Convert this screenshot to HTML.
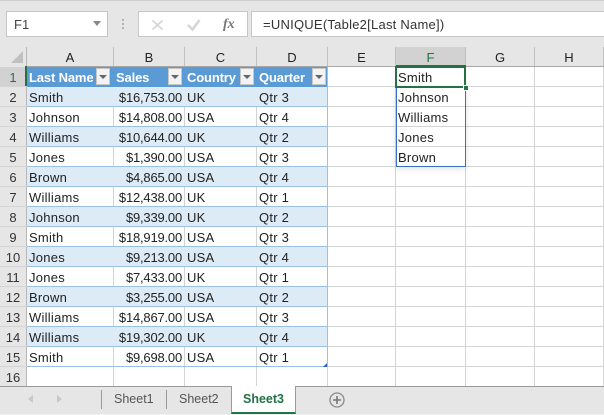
<!DOCTYPE html>
<html><head><meta charset="utf-8">
<style>
html,body{margin:0;padding:0}
body{width:604px;height:415px;overflow:hidden;background:#fff;position:relative;font-family:"Liberation Sans",sans-serif;font-size:13px;color:#222}
div{position:absolute;box-sizing:border-box}
.c{height:20px;line-height:22px;white-space:nowrap;letter-spacing:.25px}
.a{left:29px}.b{left:114px;width:68px;text-align:right;letter-spacing:-.2px}.d{left:187px}.e{left:259px}
.band{left:27px;width:301px;height:20px;background:#ddebf7;border-bottom:1px solid #9bc2e6}
.wb{left:27px;width:301px;height:20px;border-bottom:1px solid #9bc2e6}
.h{left:0;width:26px;text-align:center;height:20px;line-height:22px;color:#333;letter-spacing:0}
.ch{top:47px;height:19px;line-height:21px;text-align:center;color:#222;background:#e6e6e6;border-right:1px solid #c0c0c0}
.hl{left:0;width:604px;height:1px;background:#d4d4d4}
.vl{top:67px;width:1px;height:319px;background:#d4d4d4}
.th{top:67px;height:19px;line-height:22px;color:#fff;font-weight:bold;letter-spacing:-.15px;white-space:nowrap}
.fb{top:68px;width:14px;height:17px;background:#f3f3f3;border:1px solid #c8c8c8}
.fb:after{content:"";position:absolute;left:2px;top:6px;border:4px solid transparent;border-top:4px solid #666;border-bottom:0}
</style></head><body>

<div style="left:0;top:0;width:604px;height:47px;background:#e6e6e6"></div>
<div style="left:0;top:0;width:604px;height:1px;background:#cfcfcf"></div>
<div style="left:6px;top:11px;width:102px;height:26px;background:#fff;border:1px solid #c6c6c6"></div>
<div style="left:14px;top:16px;height:18px;line-height:18px;color:#444">F1</div>
<div style="left:93px;top:21px;border:4px solid transparent;border-top:5px solid #888;border-bottom:0"></div>
<div style="left:122px;top:19px;width:2px;height:2px;background:#b5b5b5"></div>
<div style="left:122px;top:23px;width:2px;height:2px;background:#b5b5b5"></div>
<div style="left:122px;top:27px;width:2px;height:2px;background:#b5b5b5"></div>
<div style="left:138px;top:11px;width:110px;height:26px;background:#fff;border:1px solid #c6c6c6"></div>
<svg style="position:absolute;left:150px;top:17px" width="90" height="16" viewBox="0 0 90 16">
<path d="M2.5 3.5L12.5 12.5M12.5 3.5L2.5 12.5" stroke="#d6d6d6" stroke-width="1.8" fill="none"/>
<path d="M38 8L42.5 12.5L49.5 3" stroke="#d6d6d6" stroke-width="2.6" fill="none"/>
</svg>
<div style="left:223px;top:16px;height:18px;line-height:18px;font-family:'Liberation Serif',serif;font-style:italic;font-weight:bold;font-size:14px;color:#777">fx</div>
<div style="left:251px;top:11px;width:353px;height:26px;background:#fff;border:1px solid #c6c6c6;border-right:0"></div>
<div style="left:263px;top:16px;height:18px;line-height:18px;color:#333;letter-spacing:.24px;white-space:nowrap">=UNIQUE(Table2[Last Name])</div>

<div style="left:0;top:47px;width:604px;height:20px;background:#e6e6e6;border-bottom:1px solid #a8a8a8"></div>
<div style="left:0;top:47px;width:27px;height:340px;background:#e6e6e6;border-right:1px solid #b8b8b8"></div>
<div style="left:11px;top:51px;width:0;height:0;border-style:solid;border-width:0 0 12px 12px;border-color:transparent transparent #c0c0c0 transparent"></div>
<div class="ch" style="left:27px;width:87px">A</div>
<div class="ch" style="left:114px;width:71px">B</div>
<div class="ch" style="left:185px;width:72px">C</div>
<div class="ch" style="left:257px;width:71px">D</div>
<div class="ch" style="left:328px;width:68px">E</div>
<div class="ch" style="left:396px;width:70px;background:#d2d2d2;color:#217346">F</div>
<div class="ch" style="left:466px;width:69px">G</div>
<div class="ch" style="left:535px;width:69px">H</div>
<div style="left:396px;top:65px;width:70px;height:2px;background:#217346"></div>
<div style="left:0;top:67px;width:26px;height:19px;background:#d2d2d2"></div>
<div style="left:25px;top:66px;width:2px;height:21px;background:#217346"></div>

<div class="vl" style="left:113px"></div><div class="vl" style="left:184px"></div><div class="vl" style="left:256px"></div><div class="vl" style="left:327px"></div><div class="vl" style="left:395px"></div><div class="vl" style="left:465px"></div><div class="vl" style="left:534px"></div><div class="vl" style="left:603px"></div>
<div class="hl" style="top:86px"></div><div class="hl" style="top:106px"></div><div class="hl" style="top:126px"></div><div class="hl" style="top:146px"></div><div class="hl" style="top:166px"></div><div class="hl" style="top:186px"></div><div class="hl" style="top:206px"></div><div class="hl" style="top:226px"></div><div class="hl" style="top:246px"></div><div class="hl" style="top:266px"></div><div class="hl" style="top:286px"></div><div class="hl" style="top:306px"></div><div class="hl" style="top:326px"></div><div class="hl" style="top:346px"></div><div class="hl" style="top:366px"></div>

<div style="left:27px;top:67px;width:301px;height:20px;background:#5b9bd5"></div>
<div class="th" style="left:29px">Last Name</div><div class="fb" style="left:96px"></div>
<div class="th" style="left:116px">Sales</div><div class="fb" style="left:168px"></div>
<div class="th" style="left:187px">Country</div><div class="fb" style="left:240px"></div>
<div class="th" style="left:259px">Quarter</div><div class="fb" style="left:312px"></div>

<div class="band" style="top:87px"></div><div class="wb" style="top:107px"></div>
<div class="band" style="top:127px"></div><div class="wb" style="top:147px"></div>
<div class="band" style="top:167px"></div><div class="wb" style="top:187px"></div>
<div class="band" style="top:207px"></div><div class="wb" style="top:227px"></div>
<div class="band" style="top:247px"></div><div class="wb" style="top:267px"></div>
<div class="band" style="top:287px"></div><div class="wb" style="top:307px"></div>
<div class="band" style="top:327px"></div><div class="wb" style="top:347px"></div>
<div style="left:327px;top:67px;width:1px;height:300px;background:#9bc2e6"></div>
<div style="left:323px;top:363px;width:0;height:0;border-style:solid;border-width:0 0 4px 4px;border-color:transparent transparent #2f5fc0 transparent"></div>

<div class="h" style="top:67px;color:#217346">1</div>
<div class="h" style="top:87px">2</div><div class="c a" style="top:87px">Smith</div><div class="c b" style="top:87px">$16,753.00</div><div class="c d" style="top:87px">UK</div><div class="c e" style="top:87px">Qtr 3</div>
<div class="h" style="top:107px">3</div><div class="c a" style="top:107px">Johnson</div><div class="c b" style="top:107px">$14,808.00</div><div class="c d" style="top:107px">USA</div><div class="c e" style="top:107px">Qtr 4</div>
<div class="h" style="top:127px">4</div><div class="c a" style="top:127px">Williams</div><div class="c b" style="top:127px">$10,644.00</div><div class="c d" style="top:127px">UK</div><div class="c e" style="top:127px">Qtr 2</div>
<div class="h" style="top:147px">5</div><div class="c a" style="top:147px">Jones</div><div class="c b" style="top:147px">$1,390.00</div><div class="c d" style="top:147px">USA</div><div class="c e" style="top:147px">Qtr 3</div>
<div class="h" style="top:167px">6</div><div class="c a" style="top:167px">Brown</div><div class="c b" style="top:167px">$4,865.00</div><div class="c d" style="top:167px">USA</div><div class="c e" style="top:167px">Qtr 4</div>
<div class="h" style="top:187px">7</div><div class="c a" style="top:187px">Williams</div><div class="c b" style="top:187px">$12,438.00</div><div class="c d" style="top:187px">UK</div><div class="c e" style="top:187px">Qtr 1</div>
<div class="h" style="top:207px">8</div><div class="c a" style="top:207px">Johnson</div><div class="c b" style="top:207px">$9,339.00</div><div class="c d" style="top:207px">UK</div><div class="c e" style="top:207px">Qtr 2</div>
<div class="h" style="top:227px">9</div><div class="c a" style="top:227px">Smith</div><div class="c b" style="top:227px">$18,919.00</div><div class="c d" style="top:227px">USA</div><div class="c e" style="top:227px">Qtr 3</div>
<div class="h" style="top:247px">10</div><div class="c a" style="top:247px">Jones</div><div class="c b" style="top:247px">$9,213.00</div><div class="c d" style="top:247px">USA</div><div class="c e" style="top:247px">Qtr 4</div>
<div class="h" style="top:267px">11</div><div class="c a" style="top:267px">Jones</div><div class="c b" style="top:267px">$7,433.00</div><div class="c d" style="top:267px">UK</div><div class="c e" style="top:267px">Qtr 1</div>
<div class="h" style="top:287px">12</div><div class="c a" style="top:287px">Brown</div><div class="c b" style="top:287px">$3,255.00</div><div class="c d" style="top:287px">USA</div><div class="c e" style="top:287px">Qtr 2</div>
<div class="h" style="top:307px">13</div><div class="c a" style="top:307px">Williams</div><div class="c b" style="top:307px">$14,867.00</div><div class="c d" style="top:307px">USA</div><div class="c e" style="top:307px">Qtr 3</div>
<div class="h" style="top:327px">14</div><div class="c a" style="top:327px">Williams</div><div class="c b" style="top:327px">$19,302.00</div><div class="c d" style="top:327px">UK</div><div class="c e" style="top:327px">Qtr 4</div>
<div class="h" style="top:347px">15</div><div class="c a" style="top:347px">Smith</div><div class="c b" style="top:347px">$9,698.00</div><div class="c d" style="top:347px">USA</div><div class="c e" style="top:347px">Qtr 1</div>
<div class="h" style="top:367px">16</div>

<div style="left:396px;top:86px;width:70px;height:81px;border:1px solid #3a6fc4;border-top:0;box-shadow:0 2px 6px rgba(0,0,0,.12)"></div>
<div style="left:395px;top:66px;width:71px;height:22px;border:2px solid #217346"></div>
<div style="left:463px;top:85px;background:#217346;border:1px solid #fff;box-sizing:content-box;width:4px;height:4px"></div>
<div class="c" style="left:398px;top:67px">Smith</div>
<div class="c" style="left:398px;top:87px">Johnson</div>
<div class="c" style="left:398px;top:107px">Williams</div>
<div class="c" style="left:398px;top:127px">Jones</div>
<div class="c" style="left:398px;top:147px">Brown</div>

<div style="left:0;top:386px;width:604px;height:29px;background:#e6e6e6;border-top:1px solid #9a9a9a;border-bottom:1px solid #9a9a9a"></div>
<div style="left:0;top:414px;width:604px;height:1px;background:#f0f0f0"></div>
<div style="left:28px;top:395px;border:4px solid transparent;border-right:5px solid #c8c8c8;border-left:0"></div>
<div style="left:57px;top:395px;border:4px solid transparent;border-left:5px solid #c8c8c8;border-right:0"></div>
<div style="left:101px;top:390px;width:1px;height:19px;background:#9a9a9a"></div>
<div style="left:166px;top:390px;width:1px;height:19px;background:#9a9a9a"></div>
<div style="left:114px;top:390px;height:19px;line-height:19px;font-size:12.5px;color:#555">Sheet1</div>
<div style="left:179px;top:390px;height:19px;line-height:19px;font-size:12.5px;color:#555">Sheet2</div>
<div style="left:231px;top:386px;width:65px;height:28px;background:#fff;border-left:1px solid #9a9a9a;border-right:1px solid #9a9a9a;border-bottom:2px solid #217346"></div>
<div style="left:243px;top:390px;height:19px;line-height:19px;font-size:12.5px;font-weight:bold;color:#217346">Sheet3</div>
<svg style="position:absolute;left:328px;top:391px" width="18" height="18" viewBox="0 0 18 18">
<circle cx="9" cy="9" r="7" fill="none" stroke="#8a8a8a" stroke-width="1.3"/>
<path d="M5 9H13M9 5V13" stroke="#777" stroke-width="1.6"/>
</svg>
</body></html>
